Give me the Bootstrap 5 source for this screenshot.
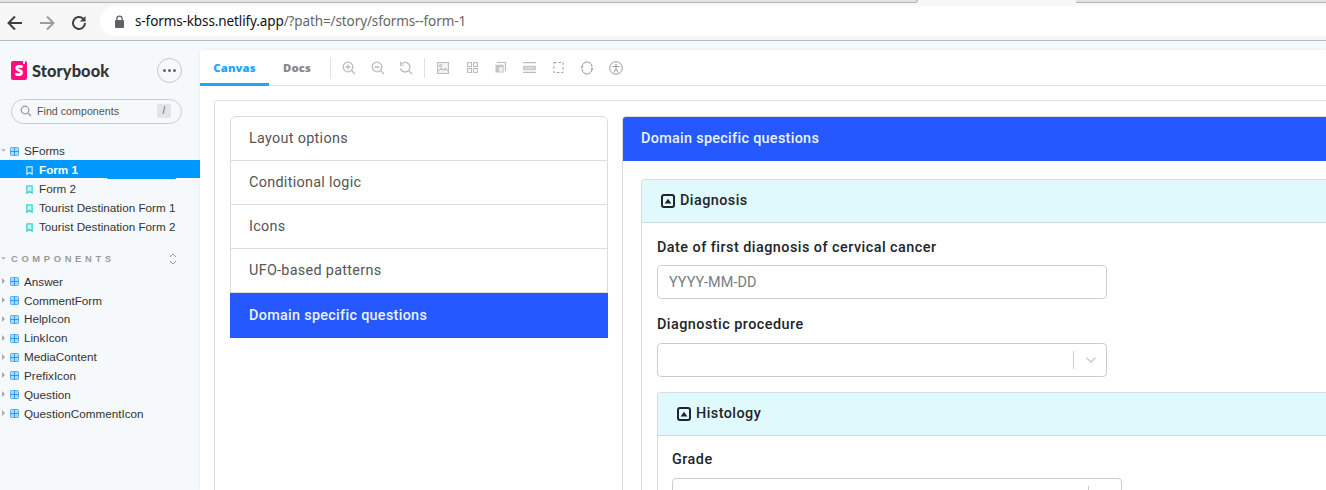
<!DOCTYPE html>
<html lang="en">
<head>
<meta charset="utf-8">
<title>Storybook</title>
<link href="https://cdn.jsdelivr.net/npm/bootstrap@5.3.0/dist/css/bootstrap.min.css" rel="stylesheet">
<style>
html,body{height:490px;overflow:hidden}
body{font-family:Roboto,sans-serif;background:#f6f9fc;color:#212529}
.tab-strip{height:9px;background:#f7f7f7;align-items:flex-start}
.tab-line{height:3px;border-bottom:1px solid #b4b4b4;background:#e4e4e4}
.tab-line.first{width:918px;border-right:1px solid #b4b4b4;border-bottom-right-radius:4px}
.tab-gap{width:158px;height:3px;background:#f7f7f7}
.chrome-bar{height:32px;background:#f7f7f7;border-bottom:1px solid #bcbcbc;padding-bottom:4px}
.nav-arrows{width:100px;padding-left:6px;gap:14px}
.addr-pill{height:30px;background:#fff;border-radius:15px 0 0 15px;margin-top:-3px;padding-left:13px;font:13.5px "Noto Sans",sans-serif;color:#111;letter-spacing:-.11px}
.addr-rest{color:#666}
.addr-lock{margin-right:10px;margin-left:1px}
.main-area{height:449px}
.side-panel{width:200px;flex:none;font:11.7px "Liberation Sans",sans-serif;color:#333}
.brand-row{height:57px;padding:0 18px 0 11px;margin-top:1px}
.brand-mark{width:16px;height:19px;background:#ff0d7e;color:#fff;font:800 15px/19px "Open Sans",sans-serif;text-align:center;border-radius:2px;margin-right:5px;position:relative}
.brand-mark::after{content:"";position:absolute;top:0;right:2px;width:2px;height:3px;background:#f6f9fc}
.brand-text{font:900 16.4px Lato,sans-serif;color:#333;letter-spacing:.1px}
.menu-dot{width:25px;height:25px;border:1px solid #c4c8cc;border-radius:50%;font-size:0;gap:2px}
.menu-dot i{width:3px;height:3px;border-radius:50%;background:#666;display:block}
.find-box{height:25px;margin:0 18px 0 11px;border:1px solid #c9cdd1;border-radius:13px;padding:0 10px 1px 8px;color:#555;font-size:10.7px}
.find-key{width:14px;height:14px;background:#e2e4e6;border-radius:2px;font-size:10px;text-align:center;line-height:14px;color:#666}
.find-ico{margin-right:5px}
.tree-group{padding-top:17px}
.tree-row{height:19px;padding-left:1px;white-space:nowrap}
.tree-row.nested{padding-left:26px}
.tree-row.active{background:#09f;color:#fff;font-weight:700;position:relative;height:18px;margin-bottom:1px}
.tree-row svg{flex:none}
.tree-row .comp-ico{margin-top:1px}
.tree-row .book-ico{margin-top:2px}
.smudge{position:absolute;left:107px;top:18px;width:69px;height:1px;background:#09f;border-radius:0 0 30px 30px}
.tree-caret{width:5px;margin-right:4px;flex:none}
.tree-name{margin-left:5px}
.tree-row.nested .tree-name{margin-left:6px}
.tree-list .tree-row{height:18.85px}
.section-head{height:19px;margin-top:13px;margin-bottom:3.75px;padding:0 23px 0 1px;font-weight:700;font-size:9.4px;letter-spacing:3.65px;color:#999}
.section-head .tree-caret{margin-right:5px}
.canvas-panel{min-width:0;padding-top:9px}
.canvas-inner{height:100%;background:#fff;border-top-left-radius:4px;box-shadow:0 0 3px rgba(0,0,0,.08)}
.tool-bar{height:36px;border-bottom:1px solid #e2e2e2;font:800 11.3px "Open Sans",sans-serif}
.tool-tab{width:69px;height:36px;line-height:35px;text-align:center;color:#888;letter-spacing:.1px}
.tool-tab.active{color:#1ea7fd;border-bottom:3px solid #1ea7fd}
.tool-tab.docs{width:56px}
.tool-sep{width:1px;height:20px;background:#e0e0e0;margin:0 3.5px 0 5px}
.tool-sep.second{margin:0 4px 0 3.5px}
.tool-ico{width:28.7px;text-align:center;line-height:0;flex:none}
.story-area{padding:14px 0 0 14px;min-height:0;overflow:hidden}
.frame-box{border:1px solid #dfdfdf;border-right:0;border-radius:4px 0 0 0;padding:15px 0 0 15px;height:500px;letter-spacing:.3px}
.steps-col{width:378px;flex:none;height:222px;font-size:14.4px}
.steps-col .list-group-item{height:44px;padding:0 18px;line-height:43px;color:#555;border-color:#dcdcdc}
.steps-col .list-group-item:first-child{height:45px}
.steps-col .list-group-item.active{background:#2558ff;border-color:#2558ff;color:#e8f4ff;font-weight:500;height:45px;line-height:43px;margin-top:0;border-radius:0}
.form-col{margin-left:14px;min-width:0;flex:1;border-right:0;border-radius:4px 0 0 0;border-color:#dcdcdc}
.form-col>.card-header{height:44px;line-height:43px;padding:0 18px;background:#2558ff;color:#e8f4ff;font-size:14.4px;font-weight:500;border:0;border-radius:3px 0 0 0}
.form-col>.card-body{padding:18px 0 0 18px}
.q-card{border-right:0;border-radius:4px 0 0 0;border-color:#d9dde0}
.q-card>.card-header{height:43px;background:#e0f9fc;border-color:#c9dde0;padding:0 19px;font-size:14.4px;font-weight:500;letter-spacing:.45px;border-radius:3px 0 0 0}
.q-card>.card-header svg{margin-right:5px}
.q-card>.card-body{padding:15px 0 0 15px}
.q-card .q-card>.card-body{padding:14px 0 0 14px}
.field-label{display:block;font-size:14.4px;font-weight:500;line-height:20px;margin-bottom:7px;letter-spacing:.47px}
.field-label.to-select{margin-bottom:8px}
.field-box{width:450px;height:34px;border:1px solid #ccd0d4;border-radius:4px;padding:0 11px;font-size:14.4px;letter-spacing:.1px;box-shadow:none;margin-bottom:16px}
.field-box::placeholder{color:#757d85}
.select-box{width:450px;height:34px;border:1px solid #ccc;border-radius:4px;margin-bottom:15px;padding-right:7px}
.select-rule{width:1px;height:18px;background:#ccc;margin-right:9px}
</style>
</head>
<body class="d-flex flex-column">
<svg width="0" height="0" class="d-none">
<symbol id="comp" viewBox="0 0 10 10"><rect x=".5" y=".5" width="9" height="9" rx="1.300" fill="#a9d9fb" stroke="#4aa8ee" stroke-width="1"/><path d="M5 .5v9M.5 5h9" stroke="#2b93e6" stroke-width="1"/></symbol>
<symbol id="mark" viewBox="0 0 8 10"><path d="M1 .8h6v8.500L4 7.200 1 9.300z" fill="#c8f5f4" stroke="#37d5d3" stroke-width="1.500"/></symbol>
<symbol id="markw" viewBox="0 0 8 10"><path d="M1 .8h6v8.500L4 7.200 1 9.300z" fill="none" stroke="#d6f0ff" stroke-width="1.300"/></symbol>
<symbol id="caret" viewBox="0 0 5 6"><path d="M1 0l3 3-3 3z" fill="#a8a8a8"/></symbol>
<symbol id="caretd" viewBox="0 0 6 5"><path d="M0 1h6L3 4z" fill="#b4b4b4"/></symbol>
<symbol id="folded" viewBox="0 0 14 14"><rect x="1" y="1" width="12" height="12" rx="2" fill="none" stroke="#212529" stroke-width="2"/><path d="M3.600 9.600L7 4.800l3.400 4.800z" fill="#212529"/></symbol>
<symbol id="chev" viewBox="0 0 20 20"><path d="M4.500 7.200L10 12.600l5.500-5.400" fill="none" stroke="#ccc" stroke-width="2"/></symbol>
</svg>

<div class="tab-strip d-flex">
  <div class="tab-line first"></div><div class="tab-gap"></div><div class="tab-line flex-grow-1"></div>
</div>
<div class="chrome-bar d-flex align-items-center">
  <div class="nav-arrows d-flex align-items-center">
    <svg width="18" height="18" viewBox="0 0 18 18"><path d="M16 9H3M9 2.500L2.500 9 9 15.500" fill="none" stroke="#3c4043" stroke-width="2"/></svg>
    <svg width="18" height="18" viewBox="0 0 18 18"><path d="M2 9h13M9 2.500L15.500 9 9 15.500" fill="none" stroke="#9a9da0" stroke-width="2"/></svg>
    <svg width="18" height="18" viewBox="0 0 18 18"><path d="M15 9a6 6 0 1 1-1.800-4.300" fill="none" stroke="#3c4043" stroke-width="2"/><path d="M15.500 2v5.500H10z" fill="#3c4043"/></svg>
  </div>
  <div class="addr-pill flex-grow-1 d-flex align-items-center">
    <svg class="addr-lock" width="11" height="13" viewBox="0 0 11 13"><path d="M2.800 5.500V3.800a2.700 2.700 0 0 1 5.400 0v1.700" fill="none" stroke="#5f6368" stroke-width="1.300"/><rect x="1" y="5" width="9" height="8" rx="1" fill="#5f6368"/></svg>
    <span>s-forms-kbss.netlify.app<span class="addr-rest">/?path=/story/sforms--form-1</span></span>
  </div>
</div>

<div class="main-area d-flex">
  <aside class="side-panel">
    <div class="brand-row d-flex align-items-center">
      <span class="brand-mark">S</span><span class="brand-text flex-grow-1">Storybook</span>
      <span class="menu-dot d-flex align-items-center justify-content-center"><i></i><i></i><i></i></span>
    </div>
    <div class="find-box d-flex align-items-center">
      <svg width="12" height="12" viewBox="0 0 12 12" class="find-ico"><circle cx="5" cy="5" r="3.800" fill="none" stroke="#999" stroke-width="1.200"/><path d="M8 8l3 3" stroke="#999" stroke-width="1.300"/></svg>
      <span class="flex-grow-1">Find components</span><span class="find-key">/</span>
    </div>
    <div class="tree-group">
      <div class="tree-row d-flex align-items-center"><svg class="tree-caret" width="5" height="5"><use href="#caretd"/></svg><svg class="comp-ico" width="9" height="9"><use href="#comp"/></svg><span class="tree-name">SForms</span></div>
      <div class="tree-row nested active d-flex align-items-center"><svg class="book-ico" width="7" height="9"><use href="#markw"/></svg><span class="tree-name">Form 1</span><span class="smudge"></span></div>
      <div class="tree-row nested d-flex align-items-center"><svg class="book-ico" width="7" height="9"><use href="#mark"/></svg><span class="tree-name">Form 2</span></div>
      <div class="tree-row nested d-flex align-items-center"><svg class="book-ico" width="7" height="9"><use href="#mark"/></svg><span class="tree-name">Tourist Destination Form 1</span></div>
      <div class="tree-row nested d-flex align-items-center"><svg class="book-ico" width="7" height="9"><use href="#mark"/></svg><span class="tree-name">Tourist Destination Form 2</span></div>
    </div>
    <div class="section-head d-flex align-items-center">
      <svg class="tree-caret" width="5" height="5"><use href="#caretd"/></svg><span class="flex-grow-1">COMPONENTS</span>
      <svg width="8" height="12" viewBox="0 0 8 12"><path d="M1 4l3-3 3 3M1 8l3 3 3-3" fill="none" stroke="#999" stroke-width="1"/></svg>
    </div>
    <div class="tree-list">
    <div class="tree-row d-flex align-items-center"><svg class="tree-caret" width="5" height="6"><use href="#caret"/></svg><svg class="comp-ico" width="9" height="9"><use href="#comp"/></svg><span class="tree-name">Answer</span></div>
    <div class="tree-row d-flex align-items-center"><svg class="tree-caret" width="5" height="6"><use href="#caret"/></svg><svg class="comp-ico" width="9" height="9"><use href="#comp"/></svg><span class="tree-name">CommentForm</span></div>
    <div class="tree-row d-flex align-items-center"><svg class="tree-caret" width="5" height="6"><use href="#caret"/></svg><svg class="comp-ico" width="9" height="9"><use href="#comp"/></svg><span class="tree-name">HelpIcon</span></div>
    <div class="tree-row d-flex align-items-center"><svg class="tree-caret" width="5" height="6"><use href="#caret"/></svg><svg class="comp-ico" width="9" height="9"><use href="#comp"/></svg><span class="tree-name">LinkIcon</span></div>
    <div class="tree-row d-flex align-items-center"><svg class="tree-caret" width="5" height="6"><use href="#caret"/></svg><svg class="comp-ico" width="9" height="9"><use href="#comp"/></svg><span class="tree-name">MediaContent</span></div>
    <div class="tree-row d-flex align-items-center"><svg class="tree-caret" width="5" height="6"><use href="#caret"/></svg><svg class="comp-ico" width="9" height="9"><use href="#comp"/></svg><span class="tree-name">PrefixIcon</span></div>
    <div class="tree-row d-flex align-items-center"><svg class="tree-caret" width="5" height="6"><use href="#caret"/></svg><svg class="comp-ico" width="9" height="9"><use href="#comp"/></svg><span class="tree-name">Question</span></div>
    <div class="tree-row d-flex align-items-center"><svg class="tree-caret" width="5" height="6"><use href="#caret"/></svg><svg class="comp-ico" width="9" height="9"><use href="#comp"/></svg><span class="tree-name">QuestionCommentIcon</span></div>
    </div>
  </aside>

  <div class="canvas-panel flex-grow-1">
    <div class="canvas-inner d-flex flex-column">
      <div class="tool-bar d-flex align-items-center flex-none">
        <div class="tool-tab active">Canvas</div>
        <div class="tool-tab docs">Docs</div>
        <div class="tool-sep"></div>
        <div class="tool-ico"><svg width="14" height="14" viewBox="0 0 14 14" fill="none" stroke="#bbb" stroke-width="1.300"><circle cx="6" cy="6" r="4.800"/><path d="M9.500 9.500L13 13M6 3.500v5M3.500 6h5"/></svg></div>
        <div class="tool-ico"><svg width="14" height="14" viewBox="0 0 14 14" fill="none" stroke="#bbb" stroke-width="1.300"><circle cx="6" cy="6" r="4.800"/><path d="M9.500 9.500L13 13M3.500 6h5"/></svg></div>
        <div class="tool-ico"><svg width="14" height="14" viewBox="0 0 14 14" fill="none" stroke="#bbb" stroke-width="1.300"><path d="M2.500 3A4.800 4.800 0 1 1 1.500 7.500M9.500 9.500L13 13"/><path d="M1.500 .8v3.400h3.400" stroke-width="1.100"/></svg></div>
        <div class="tool-sep second"></div>
        <div class="tool-ico"><svg width="12" height="12" viewBox="0 0 13 13" fill="none" stroke="#bbb" stroke-width="1.100"><rect x=".6" y=".6" width="11.800" height="11.800" fill="#f4f4f4"/><circle cx="4" cy="4" r="1.200"/><path d="M1 10l3.500-3 2.500 2 2-2 3 3"/></svg></div>
        <div class="tool-ico"><svg width="11" height="11" viewBox="0 0 12 12" fill="none" stroke="#bbb" stroke-width="1.200"><rect x=".7" y=".7" width="4.200" height="4.200"/><rect x="7.100" y=".7" width="4.200" height="4.200"/><rect x=".7" y="7.100" width="4.200" height="4.200"/><rect x="7.100" y="7.100" width="4.200" height="4.200"/></svg></div>
        <div class="tool-ico"><svg width="11" height="11" viewBox="0 0 12 12"><path d="M2 .6h9.400V10" fill="none" stroke="#bbb" stroke-width="1.200"/><rect x=".5" y="3" width="9" height="8.500" fill="#c4c4c4"/><rect x="4.500" y="5.500" width="4" height="5" fill="#eee"/></svg></div>
        <div class="tool-ico"><svg width="13" height="11" viewBox="0 0 14 12"><path d="M0 .7h14M0 11.300h14" stroke="#bbb" stroke-width="1.200"/><rect y="4" width="14" height="5" rx=".5" fill="#c8c8c8"/><path d="M2 6.500h10" stroke="#eee"/></svg></div>
        <div class="tool-ico"><svg width="11" height="11" viewBox="0 0 11 12" fill="none" stroke="#999" stroke-width="1"><rect x=".5" y=".5" width="10" height="11" stroke-dasharray="3 2"/></svg></div>
        <div class="tool-ico"><svg width="14" height="14" viewBox="0 0 14 14" fill="none" stroke="#999" stroke-width="1"><path d="M2 6a5 5 0 0 1 10 0M12 8a5 5 0 0 1-10 0"/><path d="M.5 5.500h3L2 7.500zM10.500 8.500h3L12 6.500z" fill="#999" stroke="none"/></svg></div>
        <div class="tool-ico"><svg width="14" height="14" viewBox="0 0 14 14" fill="none" stroke="#999" stroke-width="1"><circle cx="7" cy="7" r="6.300"/><circle cx="7" cy="3.700" r=".9" fill="#999" stroke="none"/><path d="M3.500 5.500h7M7 5.500V8M7 8l-2 3.500M7 8l2 3.500"/></svg></div>
      </div>
      <div class="story-area flex-grow-1">
        <div class="frame-box d-flex align-items-start">
          <div class="steps-col list-group">
            <a class="list-group-item">Layout options</a>
            <a class="list-group-item">Conditional logic</a>
            <a class="list-group-item">Icons</a>
            <a class="list-group-item">UFO-based patterns</a>
            <a class="list-group-item active">Domain specific questions</a>
          </div>
          <div class="form-col card">
            <div class="card-header">Domain specific questions</div>
            <div class="card-body">
              <div class="q-card card">
                <div class="card-header d-flex align-items-center"><svg width="14" height="14"><use href="#folded"/></svg>Diagnosis</div>
                <div class="card-body">
                  <label class="field-label">Date of first diagnosis of cervical cancer</label>
                  <input class="form-control field-box" placeholder="YYYY-MM-DD">
                  <label class="field-label to-select">Diagnostic procedure</label>
                  <div class="select-box d-flex align-items-center justify-content-end"><span class="select-rule"></span><svg width="16" height="16"><use href="#chev"/></svg></div>
                  <div class="q-card card">
                    <div class="card-header d-flex align-items-center"><svg width="14" height="14"><use href="#folded"/></svg>Histology</div>
                    <div class="card-body">
                      <label class="field-label to-select">Grade</label>
                      <div class="select-box d-flex align-items-center justify-content-end"><span class="select-rule"></span><svg width="16" height="16"><use href="#chev"/></svg></div>
                    </div>
                  </div>
                </div>
              </div>
            </div>
          </div>
        </div>
      </div>
    </div>
  </div>
</div>
<script src="https://cdn.jsdelivr.net/npm/bootstrap@5.3.0/dist/js/bootstrap.bundle.min.js"></script>
</body>
</html>
